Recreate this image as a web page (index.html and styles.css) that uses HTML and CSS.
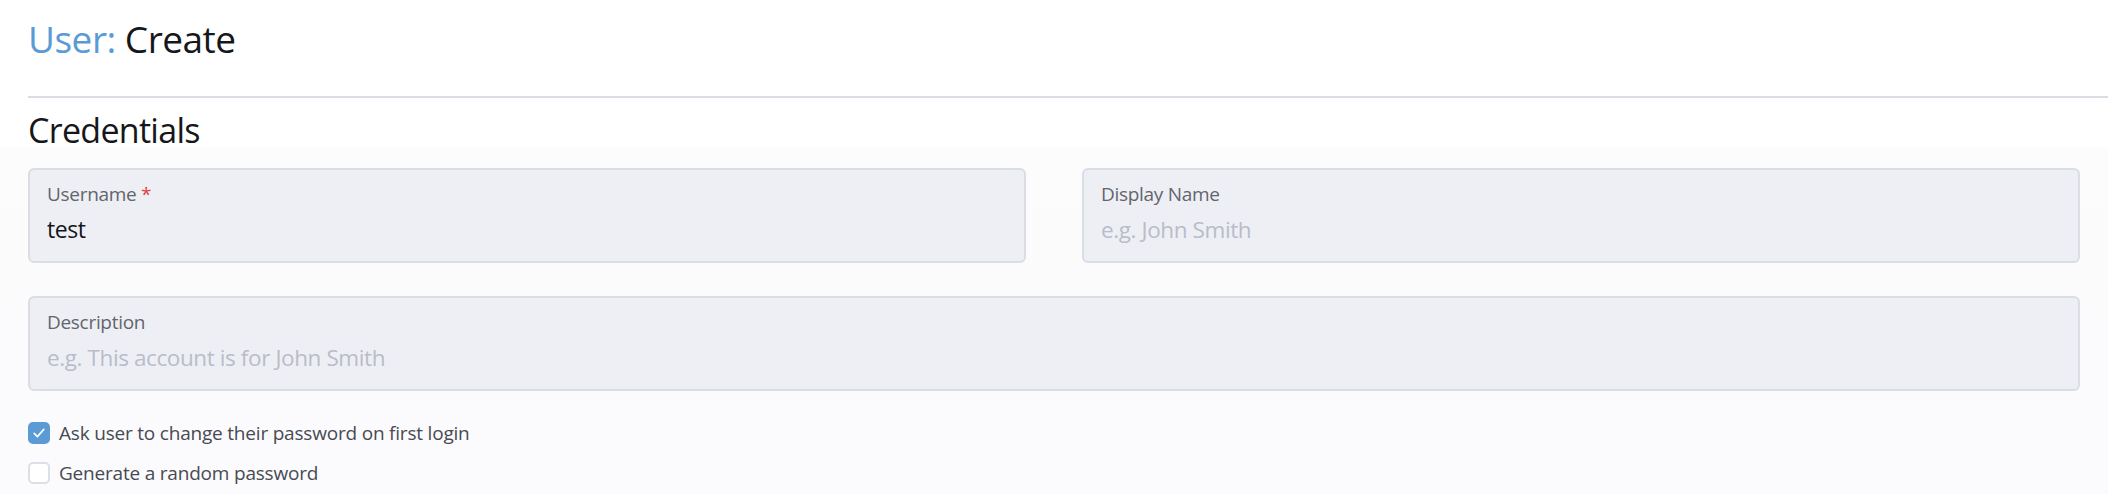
FILE: index.html
```html
<!DOCTYPE html>
<html lang="en">
<head>
<meta charset="utf-8">
<title>User: Create</title>
<link rel="stylesheet" href="styles.css">
</head>
<body>
<div class="page">
  <header class="page-header">
    <h1 class="title"><span class="title-kind">User:</span> Create</h1>
    <hr class="divider">
    <h2 class="section-title">Credentials</h2>
  </header>
  <form class="form">
    <div class="field-grid">
      <label class="field">
        <span class="field-label">Username <span class="required">*</span></span>
        <input class="field-input" type="text" value="test">
      </label>
      <label class="field">
        <span class="field-label">Display Name</span>
        <input class="field-input" type="text" placeholder="e.g. John Smith">
      </label>
      <label class="field field-wide">
        <span class="field-label">Description</span>
        <input class="field-input" type="text" placeholder="e.g. This account is for John Smith">
      </label>
    </div>
    <div class="checks">
      <label class="check">
        <span class="check-box is-checked">
          <svg viewBox="0 0 22 22" width="22" height="22" aria-hidden="true"><path d="M6.2 11.4 L9.4 14.6 L15.8 7.4" fill="none" stroke="#fff" stroke-width="1.6" stroke-linecap="round" stroke-linejoin="round"/></svg>
        </span>
        <span class="check-text">Ask user to change their password on first login</span>
      </label>
      <label class="check">
        <span class="check-box"></span>
        <span class="check-text">Generate a random password</span>
      </label>
    </div>
  </form>
</div>
</body>
</html>
```
FILE: styles.css
```css
* { box-sizing: border-box; }
html, body { margin: 0; padding: 0; }
body {
  font-family: "Open Sans", "Noto Sans", "Liberation Sans", sans-serif;
  background: linear-gradient(#ffffff 0, #ffffff 147px, #fcfcfd 147px, #fbfbfd 100%);
  color: #1b1c1f;
  min-height: 494px;
}
.page { padding: 0 28px; }
.page-header { padding-top: 16px; }
.title {
  margin: 0;
  font-size: 37px;
  line-height: 46px;
  font-weight: 500;
  letter-spacing: -0.5px;
  color: #16171a;
}
.title-kind { color: #5b9bd5; }
.divider {
  margin: 34px -28px 0 0;
  border: 0;
  height: 2px;
  background: #dadde3;
}
.section-title {
  margin: 12px 0 0;
  font-size: 34px;
  line-height: 40px;
  font-weight: 500;
  letter-spacing: -0.7px;
  color: #16171a;
}
.form { padding-top: 18px; }
.field-grid {
  display: grid;
  grid-template-columns: 1fr 1fr;
  column-gap: 56px;
  row-gap: 33px;
}
.field {
  display: flex;
  flex-direction: column;
  height: 95px;
  padding: 12px 17px 0;
  background: #eeeff4;
  border: 2px solid #dadde4;
  border-radius: 6px;
}
.field-wide { grid-column: 1 / 3; }
.field-label {
  font-size: 19px;
  line-height: 24px;
  color: #62656d;
  letter-spacing: -0.3px;
}
.required { color: #e0413f; }
.field-input {
  margin-top: 8px;
  padding: 0;
  border: 0;
  outline: none;
  background: transparent;
  font-family: inherit;
  font-size: 23px;
  line-height: 30px;
  height: 30px;
  letter-spacing: -0.4px;
  color: #141518;
}
.field-input::placeholder { color: #b9bccb; opacity: 1; font-size: 22.5px; }
.checks {
  display: flex;
  flex-direction: column;
  gap: 18px;
  padding-top: 31px;
}
.check {
  display: flex;
  align-items: center;
  gap: 9px;
  height: 22px;
}
.check-box {
  width: 22px;
  height: 22px;
  flex: none;
  border: 2px solid #dcdfe5;
  border-radius: 5px;
  background: #ffffff;
  display: flex;
  align-items: center;
  justify-content: center;
}
.check-box.is-checked {
  background: #5b9bd5;
  border-color: #5b9bd5;
}
.check-box svg { display: block; flex: none; }
.check-text {
  font-size: 19px;
  line-height: 22px;
  color: #474a52;
  letter-spacing: -0.2px;
}
```
